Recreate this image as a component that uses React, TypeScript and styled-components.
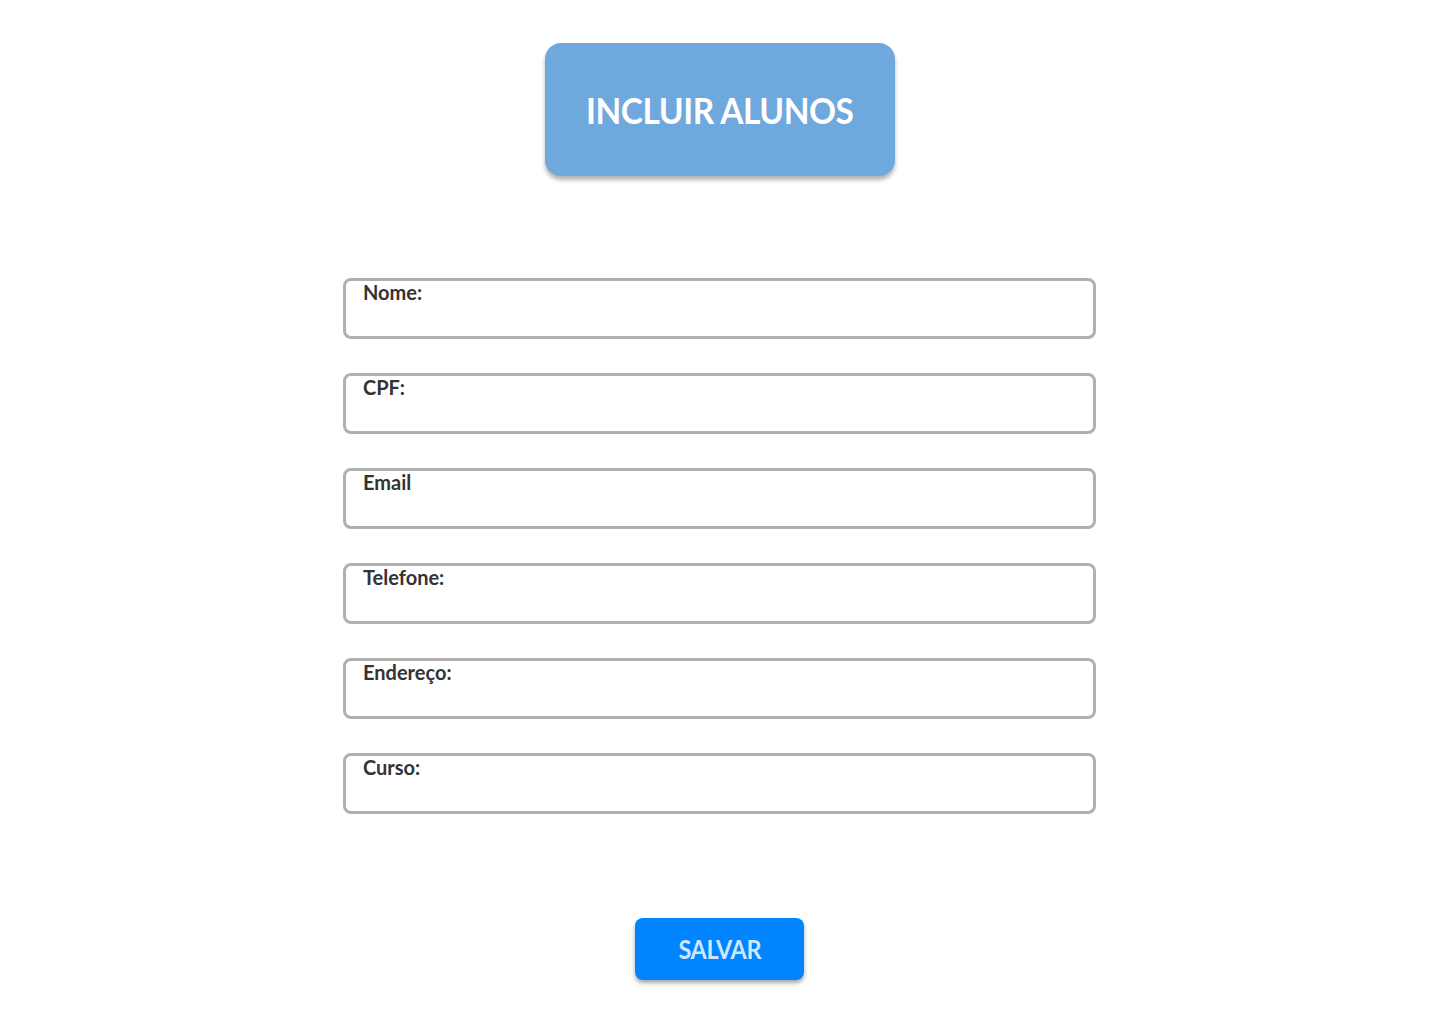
import styled, { createGlobalStyle } from "styled-components";

const GlobalStyle = createGlobalStyle`
  html, body {
    margin: 0;
    padding: 0;
    background: #ffffff;
    font-family: Lato, "Open Sans", sans-serif;
  }
`;

const Page = styled.main`
  display: flex;
  flex-direction: column;
  align-items: center;
  padding-top: 43px;
  min-height: 1024px;
  box-sizing: border-box;
`;

const Title = styled.h1`
  margin: 0;
  width: 350px;
  height: 133px;
  display: flex;
  align-items: center;
  justify-content: center;
  background: #6fa8dc;
  border-radius: 16px;
  box-shadow: 0 4px 4px rgba(0, 0, 0, 0.3);
  color: #ffffff;
  font-family: Lato, sans-serif;
  font-weight: 700;
  font-size: 36px;
`;

/* the reference face is a condensed sans, so squeeze Lato a little */
const Narrow = styled.span<{ $scale: number }>`
  display: inline-block;
  letter-spacing: -0.5px;
  transform: scaleX(${(p) => p.$scale});
`;

const Form = styled.form`
  display: flex;
  flex-direction: column;
  gap: 34px;
  margin-top: 102px;
  width: 753px;
  margin-right: 1px;
`;

const Field = styled.label`
  display: block;
  height: 61px;
  box-sizing: border-box;
  border: 3px solid #b0b0b0;
  border-radius: 8px;
  padding: 0 17px;
`;

const LabelText = styled.span`
  display: block;
  font-family: Lato, sans-serif;
  font-weight: 700;
  font-size: 20px;
  line-height: 22px;
  color: #333333;
`;

const Input = styled.input`
  display: block;
  width: 100%;
  border: none;
  outline: none;
  background: transparent;
  font-family: Lato, sans-serif;
  font-size: 16px;
  padding: 0;
`;

const SaveButton = styled.button`
  margin-top: 104px;
  margin-right: 1px;
  width: 169px;
  height: 62px;
  border: none;
  border-radius: 8px;
  background: #0084ff;
  box-shadow: 0 3px 4px rgba(0, 0, 0, 0.35);
  color: #cfe6ff;
  font-family: Lato, sans-serif;
  font-weight: 700;
  font-size: 26px;
  cursor: pointer;
`;

const fields = ["Nome:", "CPF:", "Email", "Telefone:", "Endereço:", "Curso:"];

export default function App() {
  return (
    <>
      <GlobalStyle />
      <Page>
        <Title>
          <Narrow $scale={0.93}>INCLUIR ALUNOS</Narrow>
        </Title>
        <Form onSubmit={(e) => e.preventDefault()}>
          {fields.map((f) => (
            <Field key={f}>
              <LabelText>{f}</LabelText>
              <Input type="text" />
            </Field>
          ))}
        </Form>
        <SaveButton type="button">
          <Narrow $scale={0.9}>SALVAR</Narrow>
        </SaveButton>
      </Page>
    </>
  );
}
